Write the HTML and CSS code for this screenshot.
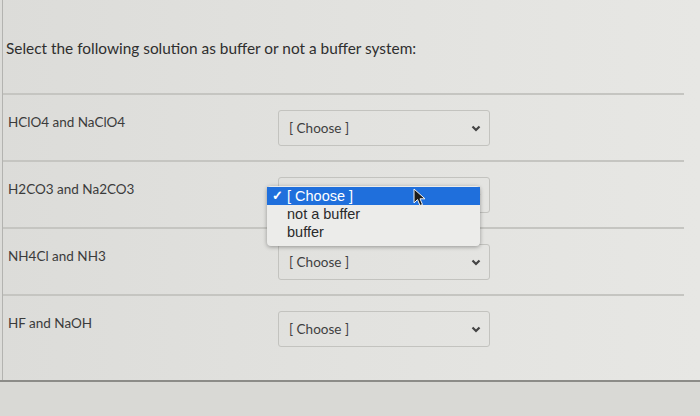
FILE: index.html
```html
<!DOCTYPE html>
<html lang="en">
  <head>
    <meta charset="UTF-8" />
    <title>Buffer quiz</title>
    <link rel="stylesheet" href="styles.css">
  </head>
  <body>
    <div class="question">
      <p class="prompt">Select the following solution as buffer or not a buffer system:</p>

      <div class="answers">
        <div class="row">
          <span class="label">HClO4 and NaClO4</span>
          <div class="select">
            <span>[ Choose ]</span>
            <svg class="chevron" width="10" height="7" viewBox="0 0 10 7"><path d="M1.5 1.5 L5 5 L8.5 1.5" fill="none" stroke="#444" stroke-width="2.2"/></svg>
          </div>
        </div>

        <div class="row">
          <span class="label">H2CO3 and Na2CO3</span>
          <div class="select open">
            <svg class="chevron" width="10" height="7" viewBox="0 0 10 7"><path d="M1.5 1.5 L5 5 L8.5 1.5" fill="none" stroke="#444" stroke-width="2.2"/></svg>
          </div>
          <!-- open dropdown list -->
          <ul class="menu">
            <li class="active"><span class="check">✓</span>[ Choose ]</li>
            <li>not a buffer</li>
            <li>buffer</li>
          </ul>
          <svg class="pointer" width="14" height="20" viewBox="0 0 14 20"><path d="M1 1 L1 15 L4.5 11.5 L7 17.5 L9.5 16.5 L7 10.8 L12 10.8 Z" fill="#1b1b1b" stroke="#f4f4f4" stroke-width="1"/></svg>
        </div>

        <div class="row">
          <span class="label">NH4Cl and NH3</span>
          <div class="select">
            <span>[ Choose ]</span>
            <svg class="chevron" width="10" height="7" viewBox="0 0 10 7"><path d="M1.5 1.5 L5 5 L8.5 1.5" fill="none" stroke="#444" stroke-width="2.2"/></svg>
          </div>
        </div>

        <div class="row last">
          <span class="label">HF and NaOH</span>
          <div class="select">
            <span>[ Choose ]</span>
            <svg class="chevron" width="10" height="7" viewBox="0 0 10 7"><path d="M1.5 1.5 L5 5 L8.5 1.5" fill="none" stroke="#444" stroke-width="2.2"/></svg>
          </div>
        </div>
      </div>
    </div>
    <div class="footer"></div>
  </body>
</html>
```

FILE: styles.css
```css
body {
  margin: 0;
  height: 416px;
  overflow: hidden;
  font-family: Lato, "Open Sans", sans-serif;
  color: #3b3b3b;
  background: linear-gradient(90deg, #dcdcd9 0%, #e2e2df 50%, #e7e7e4 100%);
}

.question {
  border-left: 1px solid #b3b3b0;
  margin-left: 2px;
  height: 380px;
}

.prompt {
  margin: 0;
  padding: 39px 0 0 3px;
  height: 54px;
  font-size: 15.4px;
  color: #2f2f2f;
}

.answers {
  width: 681px;
}

.row {
  position: relative;
  display: flex;
  align-items: flex-start;
  height: 65px;
  border-top: 2px solid #c5c5c1;
}

.row.last {
  height: 84px;
}

.label {
  width: 270px;
  padding: 19px 0 0 5px;
  font-size: 13.5px;
}

.select {
  display: flex;
  align-items: center;
  justify-content: space-between;
  box-sizing: border-box;
  width: 212px;
  height: 36px;
  margin-top: 15px;
  padding: 0 8px 0 10px;
  border: 1px solid #c3c3bf;
  border-radius: 3px;
  font-size: 13.5px;
  color: #3f3f3f;
}

/* the list covers the field, only the arrow peeks out */
.select.open {
  justify-content: flex-end;
}

.menu {
  position: absolute;
  z-index: 2;
  left: 264px;
  top: 24px;
  width: 213px;
  margin: 0;
  padding: 1px 0 5px;
  list-style: none;
  background: #ececea;
  border-radius: 4px;
  box-shadow: 0 1px 4px rgba(0, 0, 0, 0.35);
  font-family: "Liberation Sans", Arial, sans-serif;
  font-size: 14.5px;
  color: #2a2a2a;
}

.menu li {
  height: 18px;
  line-height: 18px;
  padding-left: 20px;
}

.menu li.active {
  position: relative;
  background: #1f6fdc;
  color: #ffffff;
}

.check {
  position: absolute;
  left: 5px;
  font-size: 13px;
  font-weight: bold;
}

.pointer {
  position: absolute;
  z-index: 3;
  left: 410px;
  top: 26px;
}

.footer {
  border-top: 2px solid #8c8c88;
  height: 34px;
  background: #d9d9d5;
}
```
